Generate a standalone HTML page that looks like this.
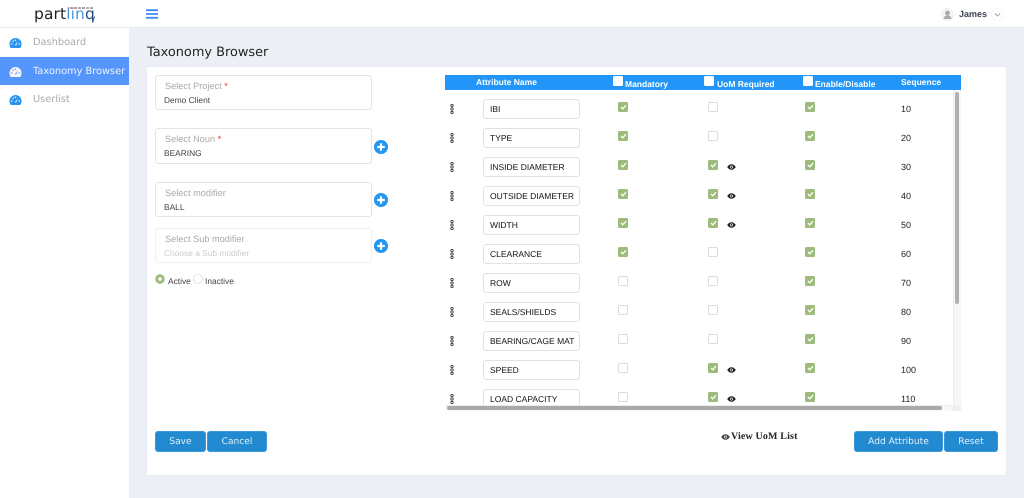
<!DOCTYPE html>
<html><head><meta charset="utf-8"><title>Taxonomy Browser</title>
<style>
*{box-sizing:border-box}
html,body{margin:0;padding:0;width:1024px;height:498px;overflow:hidden;background:#ecf0f6;font-family:"Liberation Sans",sans-serif;color:#333;text-rendering:geometricPrecision}
div,span,svg{position:absolute}
.t{white-space:nowrap}
.nav{left:0;width:129px;height:28px;font-family:"DejaVu Sans",sans-serif;font-size:9.8px;color:#aaa;line-height:29px}
.nav span{left:33px;top:0;white-space:nowrap}
.nav svg{left:9px;top:9px}
.fld{left:155px;width:217px;background:#fff;border:1px solid #e4e4e4;border-radius:3px}
.lab{left:9px;top:5px;font-size:9.2px;color:#aaa;white-space:nowrap}
.lab b{color:#e33;font-weight:400;position:static}
.val{left:8px;top:19px;font-size:8.4px;color:#444;white-space:nowrap}
.row{left:0;width:508px;height:29px}
.in{left:38px;top:5px;width:97px;height:20px;border:1px solid #e2e2e2;border-radius:3px;background:#fff;font-size:8.5px;line-height:18px;padding-left:6px;color:#111;white-space:nowrap;overflow:hidden}
.c{top:8px;width:9.5px;height:9.5px;border-radius:1.5px}
.on{background:#9dbc7c}
.off{background:#fff;border:1px solid #dcdcdc}
.c svg{left:1.5px;top:2px}
.m{left:173px}.u{left:263px}.e{left:360px}
.eye{left:282px;top:12px}
.seq{left:456px;top:10px;font-size:9px;color:#222}
.dots{left:5px;top:10px;width:4px;height:10px}
.th{top:77px;font-size:8.5px;font-weight:700;color:#fff;white-space:nowrap}
.th.l{top:78.5px}
.thc{top:76px;width:9.5px;height:9.5px;background:#fff;border-radius:1.5px}
.btn{top:431px;height:21px;background:#218ad0;border-radius:3px;border:1px solid #3a98d8;color:#e4eff8;font-family:"DejaVu Sans",sans-serif;font-size:9.1px;line-height:20px;text-align:center}
.plus{left:374px}
</style></head><body>

<div style="left:0;top:0;width:1024px;height:28px;background:#fff;border-bottom:1px solid #e6e9ef"></div>
<div style="left:0;top:28px;width:129px;height:470px;background:#fff"></div>

<div class="t" style="left:34px;top:3px;font-family:'DejaVu Sans',sans-serif;font-size:15.5px;line-height:22px;color:#222;letter-spacing:.1px">part<span style="position:static;color:#4a9ad4">lin</span><span style="position:static;color:#2a4a80">q</span></div>
<svg style="left:91px;top:16px" width="5" height="7"><path d="M3.800 .5L1.500 6" stroke="#2a4a80" stroke-width=".8" fill="none"/></svg>
<svg style="left:70px;top:7px" width="24" height="2"><rect x="0" width="3" height="2" fill="#d88"/><rect x="4" width="3" height="2" fill="#9ab"/><rect x="8" width="3" height="2" fill="#c9a"/><rect x="12" width="3" height="2" fill="#8ac"/><rect x="16" width="3" height="2" fill="#da8"/><rect x="20" width="3" height="2" fill="#9ab"/></svg>

<svg style="left:146px;top:9px" width="12" height="10"><path d="M0 1.200H12M0 5H12M0 8.800H12" stroke="#3b8df0" stroke-width="1.800"/></svg>

<svg style="left:941px;top:8px" width="13" height="13"><circle cx="6.500" cy="6.500" r="6" fill="#f6f6f6" stroke="#e4e4e4" stroke-width=".5"/><circle cx="6.500" cy="5" r="2.400" fill="#aaa"/><path d="M2.500 11c.3-3 2-3.500 4-3.500s3.700.5 4 3.500z" fill="#aaa"/></svg>
<div class="t" style="left:959px;top:9px;font-size:9px;font-weight:700;color:#3d4456">James</div>
<svg style="left:991px;top:8px" width="13" height="13"><circle cx="6.500" cy="6.500" r="6" fill="#fff" stroke="#eee" stroke-width=".6"/><path d="M3.800 5.300L6.500 8L9.200 5.300" fill="none" stroke="#999" stroke-width=".8"/></svg>

<div class="nav" style="top:28px"><svg width="13" height="12" viewBox="0 0 13 12"><path d="M6.500 1A6 6 0 0 0 .5 7c0 1.500.4 2.800 1.200 4h9.600c.8-1.200 1.200-2.500 1.200-4a6 6 0 0 0-6-6z" fill="#2b93ee"/><g fill="#fff"><circle cx="2.800" cy="7" r=".7"/><circle cx="4.200" cy="4.200" r=".7"/><circle cx="6.500" cy="3.200" r=".7"/><circle cx="10.200" cy="7" r=".7"/><path d="M9 4.300L6 8l1 .7z"/></g></svg><span>Dashboard</span></div>
<div class="nav" style="top:57px;background:#5596fc;color:#f0f5ff"><svg width="13" height="12" viewBox="0 0 13 12"><path d="M6.500 1A6 6 0 0 0 .5 7c0 1.500.4 2.800 1.200 4h9.600c.8-1.200 1.200-2.500 1.200-4a6 6 0 0 0-6-6z" fill="#f4f7ff"/><g fill="#5596fc"><circle cx="2.800" cy="7" r=".7"/><circle cx="4.200" cy="4.200" r=".7"/><circle cx="6.500" cy="3.200" r=".7"/><circle cx="10.200" cy="7" r=".7"/><path d="M9 4.300L6 8l1 .7z"/></g></svg><span>Taxonomy Browser</span></div>
<div class="nav" style="top:85px"><svg width="13" height="12" viewBox="0 0 13 12"><path d="M6.500 1A6 6 0 0 0 .5 7c0 1.500.4 2.800 1.200 4h9.600c.8-1.200 1.200-2.500 1.200-4a6 6 0 0 0-6-6z" fill="#2b93ee"/><g fill="#fff"><circle cx="2.800" cy="7" r=".7"/><circle cx="4.200" cy="4.200" r=".7"/><circle cx="6.500" cy="3.200" r=".7"/><circle cx="10.200" cy="7" r=".7"/><path d="M9 4.300L6 8l1 .7z"/></g></svg><span>Userlist</span></div>

<div class="t" style="left:147px;top:44px;font-family:'DejaVu Sans',sans-serif;font-size:12.9px;line-height:18px;color:#222">Taxonomy Browser</div>

<div style="left:147px;top:67px;width:859px;height:408px;background:#fff;border-radius:2px;box-shadow:0 0 1px #dde2ea"></div>

<div class="fld" style="top:75px;height:35px"><div class="lab">Select Project <b>*</b></div><div class="val">Demo Client</div></div>
<div class="fld" style="top:128px;height:36px"><div class="lab">Select Noun <b>*</b></div><div class="val">BEARING</div></div>
<div class="fld" style="top:182px;height:35px"><div class="lab">Select modifier</div><div class="val">BALL</div></div>
<div class="fld" style="top:228px;height:35px;border-color:#efefef"><div class="lab">Select Sub modifier</div><div class="val" style="color:#ccc">Choose a Sub modifier</div></div>

<svg class="plus" style="top:140px" width="14" height="14"><circle cx="7" cy="7" r="7" fill="#2196f3"/><path d="M7 3.200V10.800M3.200 7H10.800" stroke="#fff" stroke-width="2.200"/></svg>
<svg class="plus" style="top:193px" width="14" height="14"><circle cx="7" cy="7" r="7" fill="#2196f3"/><path d="M7 3.200V10.800M3.200 7H10.800" stroke="#fff" stroke-width="2.200"/></svg>
<svg class="plus" style="top:239px" width="14" height="14"><circle cx="7" cy="7" r="7" fill="#2196f3"/><path d="M7 3.200V10.800M3.200 7H10.800" stroke="#fff" stroke-width="2.200"/></svg>

<svg style="left:155px;top:274px" width="10" height="10"><circle cx="5" cy="5" r="4.700" fill="#9dbc7c"/><circle cx="5" cy="5" r="1.800" fill="#fff"/></svg>
<div class="t" style="left:168px;top:276px;font-size:8.4px;color:#444">Active</div>
<svg style="left:193px;top:274px" width="10" height="10"><circle cx="5" cy="5" r="4.500" fill="#fff" stroke="#ddd" stroke-width=".8"/></svg>
<div class="t" style="left:205px;top:276px;font-size:8.4px;color:#444">Inactive</div>

<div style="left:445px;top:75px;width:516px;height:15px;background:#2196f8"></div>
<div class="th" style="left:476px">Attribute Name</div>
<div class="thc" style="left:613px"></div><div class="th l" style="left:625px">Mandatory</div>
<div class="thc" style="left:704px"></div><div class="th l" style="left:717px">UoM Required</div>
<div class="thc" style="left:803px"></div><div class="th l" style="left:815px">Enable/Disable</div>
<div class="th" style="left:901px">Sequence</div>

<div style="left:445px;top:90px;width:508px;height:315px;overflow:hidden">
<div class="row" style="top:4px"><svg class="dots" viewBox="0 0 4 10"><circle cx="2" cy="1.500" r="1.200" fill="none" stroke="#333" stroke-width=".8"/><circle cx="2" cy="5" r="1.200" fill="none" stroke="#333" stroke-width=".8"/><circle cx="2" cy="8.500" r="1.200" fill="none" stroke="#333" stroke-width=".8"/></svg><div class="in">IBI</div><div class="c m on"><svg width="7" height="6"><path d="M1 3l1.800 1.800L6 1.200" fill="none" stroke="#fff" stroke-width="1.300"/></svg></div><div class="c u off"></div><div class="c e on"><svg width="7" height="6"><path d="M1 3l1.800 1.800L6 1.200" fill="none" stroke="#fff" stroke-width="1.300"/></svg></div><div class="seq">10</div></div>

<div class="row" style="top:33px"><svg class="dots" viewBox="0 0 4 10"><circle cx="2" cy="1.500" r="1.200" fill="none" stroke="#333" stroke-width=".8"/><circle cx="2" cy="5" r="1.200" fill="none" stroke="#333" stroke-width=".8"/><circle cx="2" cy="8.500" r="1.200" fill="none" stroke="#333" stroke-width=".8"/></svg><div class="in">TYPE</div><div class="c m on"><svg width="7" height="6"><path d="M1 3l1.800 1.800L6 1.200" fill="none" stroke="#fff" stroke-width="1.300"/></svg></div><div class="c u off"></div><div class="c e on"><svg width="7" height="6"><path d="M1 3l1.800 1.800L6 1.200" fill="none" stroke="#fff" stroke-width="1.300"/></svg></div><div class="seq">20</div></div>

<div class="row" style="top:62px"><svg class="dots" viewBox="0 0 4 10"><circle cx="2" cy="1.500" r="1.200" fill="none" stroke="#333" stroke-width=".8"/><circle cx="2" cy="5" r="1.200" fill="none" stroke="#333" stroke-width=".8"/><circle cx="2" cy="8.500" r="1.200" fill="none" stroke="#333" stroke-width=".8"/></svg><div class="in">INSIDE DIAMETER</div><div class="c m on"><svg width="7" height="6"><path d="M1 3l1.800 1.800L6 1.200" fill="none" stroke="#fff" stroke-width="1.300"/></svg></div><div class="c u on"><svg width="7" height="6"><path d="M1 3l1.800 1.800L6 1.200" fill="none" stroke="#fff" stroke-width="1.300"/></svg></div><svg class="eye" width="9" height="6" viewBox="0 0 9 6"><path d="M.2 3C1.500 1 3 .2 4.500 .2S7.500 1 8.800 3C7.500 5 6 5.800 4.500 5.800S1.500 5 .2 3z" fill="#222"/><circle cx="4.500" cy="3" r="1.500" fill="#fff"/><circle cx="4.500" cy="3" r=".9" fill="#222"/></svg><div class="c e on"><svg width="7" height="6"><path d="M1 3l1.800 1.800L6 1.200" fill="none" stroke="#fff" stroke-width="1.300"/></svg></div><div class="seq">30</div></div>

<div class="row" style="top:91px"><svg class="dots" viewBox="0 0 4 10"><circle cx="2" cy="1.500" r="1.200" fill="none" stroke="#333" stroke-width=".8"/><circle cx="2" cy="5" r="1.200" fill="none" stroke="#333" stroke-width=".8"/><circle cx="2" cy="8.500" r="1.200" fill="none" stroke="#333" stroke-width=".8"/></svg><div class="in">OUTSIDE DIAMETER</div><div class="c m on"><svg width="7" height="6"><path d="M1 3l1.800 1.800L6 1.200" fill="none" stroke="#fff" stroke-width="1.300"/></svg></div><div class="c u on"><svg width="7" height="6"><path d="M1 3l1.800 1.800L6 1.200" fill="none" stroke="#fff" stroke-width="1.300"/></svg></div><svg class="eye" width="9" height="6" viewBox="0 0 9 6"><path d="M.2 3C1.500 1 3 .2 4.500 .2S7.500 1 8.800 3C7.500 5 6 5.800 4.500 5.800S1.500 5 .2 3z" fill="#222"/><circle cx="4.500" cy="3" r="1.500" fill="#fff"/><circle cx="4.500" cy="3" r=".9" fill="#222"/></svg><div class="c e on"><svg width="7" height="6"><path d="M1 3l1.800 1.800L6 1.200" fill="none" stroke="#fff" stroke-width="1.300"/></svg></div><div class="seq">40</div></div>

<div class="row" style="top:120px"><svg class="dots" viewBox="0 0 4 10"><circle cx="2" cy="1.500" r="1.200" fill="none" stroke="#333" stroke-width=".8"/><circle cx="2" cy="5" r="1.200" fill="none" stroke="#333" stroke-width=".8"/><circle cx="2" cy="8.500" r="1.200" fill="none" stroke="#333" stroke-width=".8"/></svg><div class="in">WIDTH</div><div class="c m on"><svg width="7" height="6"><path d="M1 3l1.800 1.800L6 1.200" fill="none" stroke="#fff" stroke-width="1.300"/></svg></div><div class="c u on"><svg width="7" height="6"><path d="M1 3l1.800 1.800L6 1.200" fill="none" stroke="#fff" stroke-width="1.300"/></svg></div><svg class="eye" width="9" height="6" viewBox="0 0 9 6"><path d="M.2 3C1.500 1 3 .2 4.500 .2S7.500 1 8.800 3C7.500 5 6 5.800 4.500 5.800S1.500 5 .2 3z" fill="#222"/><circle cx="4.500" cy="3" r="1.500" fill="#fff"/><circle cx="4.500" cy="3" r=".9" fill="#222"/></svg><div class="c e on"><svg width="7" height="6"><path d="M1 3l1.800 1.800L6 1.200" fill="none" stroke="#fff" stroke-width="1.300"/></svg></div><div class="seq">50</div></div>

<div class="row" style="top:149px"><svg class="dots" viewBox="0 0 4 10"><circle cx="2" cy="1.500" r="1.200" fill="none" stroke="#333" stroke-width=".8"/><circle cx="2" cy="5" r="1.200" fill="none" stroke="#333" stroke-width=".8"/><circle cx="2" cy="8.500" r="1.200" fill="none" stroke="#333" stroke-width=".8"/></svg><div class="in">CLEARANCE</div><div class="c m on"><svg width="7" height="6"><path d="M1 3l1.800 1.800L6 1.200" fill="none" stroke="#fff" stroke-width="1.300"/></svg></div><div class="c u off"></div><div class="c e on"><svg width="7" height="6"><path d="M1 3l1.800 1.800L6 1.200" fill="none" stroke="#fff" stroke-width="1.300"/></svg></div><div class="seq">60</div></div>

<div class="row" style="top:178px"><svg class="dots" viewBox="0 0 4 10"><circle cx="2" cy="1.500" r="1.200" fill="none" stroke="#333" stroke-width=".8"/><circle cx="2" cy="5" r="1.200" fill="none" stroke="#333" stroke-width=".8"/><circle cx="2" cy="8.500" r="1.200" fill="none" stroke="#333" stroke-width=".8"/></svg><div class="in">ROW</div><div class="c m off"></div><div class="c u off"></div><div class="c e on"><svg width="7" height="6"><path d="M1 3l1.800 1.800L6 1.200" fill="none" stroke="#fff" stroke-width="1.300"/></svg></div><div class="seq">70</div></div>

<div class="row" style="top:207px"><svg class="dots" viewBox="0 0 4 10"><circle cx="2" cy="1.500" r="1.200" fill="none" stroke="#333" stroke-width=".8"/><circle cx="2" cy="5" r="1.200" fill="none" stroke="#333" stroke-width=".8"/><circle cx="2" cy="8.500" r="1.200" fill="none" stroke="#333" stroke-width=".8"/></svg><div class="in">SEALS/SHIELDS</div><div class="c m off"></div><div class="c u off"></div><div class="c e on"><svg width="7" height="6"><path d="M1 3l1.800 1.800L6 1.200" fill="none" stroke="#fff" stroke-width="1.300"/></svg></div><div class="seq">80</div></div>

<div class="row" style="top:236px"><svg class="dots" viewBox="0 0 4 10"><circle cx="2" cy="1.500" r="1.200" fill="none" stroke="#333" stroke-width=".8"/><circle cx="2" cy="5" r="1.200" fill="none" stroke="#333" stroke-width=".8"/><circle cx="2" cy="8.500" r="1.200" fill="none" stroke="#333" stroke-width=".8"/></svg><div class="in">BEARING/CAGE MAT</div><div class="c m off"></div><div class="c u off"></div><div class="c e on"><svg width="7" height="6"><path d="M1 3l1.800 1.800L6 1.200" fill="none" stroke="#fff" stroke-width="1.300"/></svg></div><div class="seq">90</div></div>

<div class="row" style="top:265px"><svg class="dots" viewBox="0 0 4 10"><circle cx="2" cy="1.500" r="1.200" fill="none" stroke="#333" stroke-width=".8"/><circle cx="2" cy="5" r="1.200" fill="none" stroke="#333" stroke-width=".8"/><circle cx="2" cy="8.500" r="1.200" fill="none" stroke="#333" stroke-width=".8"/></svg><div class="in">SPEED</div><div class="c m off"></div><div class="c u on"><svg width="7" height="6"><path d="M1 3l1.800 1.800L6 1.200" fill="none" stroke="#fff" stroke-width="1.300"/></svg></div><svg class="eye" width="9" height="6" viewBox="0 0 9 6"><path d="M.2 3C1.500 1 3 .2 4.500 .2S7.500 1 8.800 3C7.500 5 6 5.800 4.500 5.800S1.500 5 .2 3z" fill="#222"/><circle cx="4.500" cy="3" r="1.500" fill="#fff"/><circle cx="4.500" cy="3" r=".9" fill="#222"/></svg><div class="c e on"><svg width="7" height="6"><path d="M1 3l1.800 1.800L6 1.200" fill="none" stroke="#fff" stroke-width="1.300"/></svg></div><div class="seq">100</div></div>

<div class="row" style="top:294px"><svg class="dots" viewBox="0 0 4 10"><circle cx="2" cy="1.500" r="1.200" fill="none" stroke="#333" stroke-width=".8"/><circle cx="2" cy="5" r="1.200" fill="none" stroke="#333" stroke-width=".8"/><circle cx="2" cy="8.500" r="1.200" fill="none" stroke="#333" stroke-width=".8"/></svg><div class="in">LOAD CAPACITY</div><div class="c m off"></div><div class="c u on"><svg width="7" height="6"><path d="M1 3l1.800 1.800L6 1.200" fill="none" stroke="#fff" stroke-width="1.300"/></svg></div><svg class="eye" width="9" height="6" viewBox="0 0 9 6"><path d="M.2 3C1.500 1 3 .2 4.500 .2S7.500 1 8.800 3C7.500 5 6 5.800 4.500 5.800S1.500 5 .2 3z" fill="#222"/><circle cx="4.500" cy="3" r="1.500" fill="#fff"/><circle cx="4.500" cy="3" r=".9" fill="#222"/></svg><div class="c e on"><svg width="7" height="6"><path d="M1 3l1.800 1.800L6 1.200" fill="none" stroke="#fff" stroke-width="1.300"/></svg></div><div class="seq">110</div></div>
</div>

<div style="left:953px;top:90px;width:8px;height:315px;background:#f7f7f7;border-left:1px solid #ececec"></div>
<div style="left:955px;top:92px;width:4px;height:212px;background:#b0b0b0;border-radius:2px"></div>
<div style="left:445px;top:405px;width:508px;height:6px;background:#f7f7f7;border-top:1px solid #ececec"></div>
<div style="left:447px;top:406px;width:495px;height:4px;background:#a8a8a8;border-radius:2px"></div>
<div style="left:953px;top:405px;width:8px;height:6px;background:#efefef"></div>

<div class="btn" style="left:155px;width:51px">Save</div>
<div class="btn" style="left:207px;width:60px">Cancel</div>
<svg style="left:720.500px;top:434px" width="9" height="6" viewBox="0 0 9 6"><path d="M.2 3C1.500 1 3 .2 4.500 .2S7.500 1 8.800 3C7.500 5 6 5.800 4.500 5.800S1.500 5 .2 3z" fill="#444"/><circle cx="4.500" cy="3" r="1.500" fill="#fff"/><circle cx="4.500" cy="3" r=".9" fill="#444"/></svg>
<div class="t" style="left:731px;top:431px;font-family:'Liberation Serif',serif;font-size:10px;font-weight:700;color:#222;letter-spacing:.15px">View UoM List</div>
<div class="btn" style="left:854px;width:89px">Add Attribute</div>
<div class="btn" style="left:944px;width:54px">Reset</div>
</body></html>
